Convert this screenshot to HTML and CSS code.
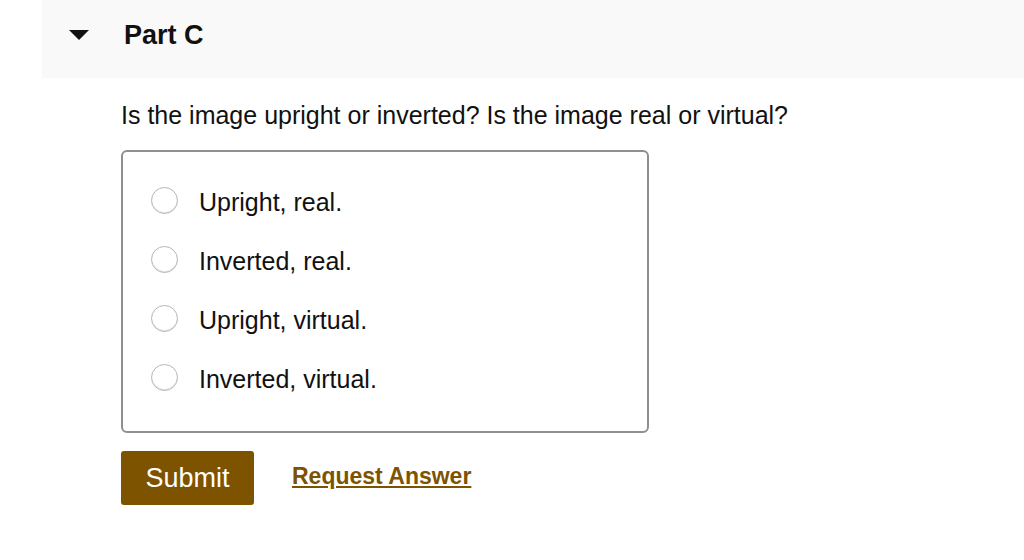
FILE: index.html
```html
<!DOCTYPE html>
<html>
<head>
<meta charset="utf-8">
<link rel="stylesheet" href="styles.css">
</head>
<body>
<div class="header">
  <span class="caret"></span>
  <h2 class="title">Part C</h2>
</div>
<div class="content">
  <p class="question">Is the image upright or inverted? Is the image real or virtual?</p>
  <div class="choices">
    <label class="choice"><span class="radio"></span><span class="label">Upright, real.</span></label>
    <label class="choice"><span class="radio"></span><span class="label">Inverted, real.</span></label>
    <label class="choice"><span class="radio"></span><span class="label">Upright, virtual.</span></label>
    <label class="choice"><span class="radio"></span><span class="label">Inverted, virtual.</span></label>
  </div>
  <div class="actions">
    <button class="submit">Submit</button>
    <a class="request" href="#">Request Answer</a>
  </div>
</div>
</body>
</html>
```

FILE: styles.css
```css
html, body {
  margin: 0;
  padding: 0;
  background: #ffffff;
  font-family: "Liberation Sans", Arial, sans-serif;
  color: #111111;
}
.header {
  margin-left: 42px;
  height: 78px;
  background: #f9f9f9;
  display: flex;
  align-items: center;
  padding-left: 27px;
  box-sizing: border-box;
  padding-bottom: 8px;
}
.caret {
  width: 0;
  height: 0;
  border-left: 10px solid transparent;
  border-right: 10px solid transparent;
  border-top: 10px solid #111111;
  margin-right: 35px;
}
.title {
  margin: 0;
  font-size: 27px;
  font-weight: bold;
  line-height: 30px;
}
.content {
  padding-left: 121px;
}
.question {
  margin: 23px 0 0 0;
  font-size: 25px;
  line-height: 28px;
  color: #111111;
}
.choices {
  margin-top: 21px;
  width: 528px;
  height: 283px;
  box-sizing: border-box;
  border: 2px solid #8f8f8f;
  border-radius: 6px;
  padding: 36px 0 0 28px;
  display: flex;
  flex-direction: column;
  gap: 31px;
}
.choice {
  display: flex;
  align-items: center;
  height: 28px;
}
.radio {
  width: 27px;
  height: 27px;
  box-sizing: border-box;
  border-radius: 50%;
  border: 1px solid #b5b5b5;
  background: #ffffff;
  box-shadow: inset 0 -1px 1px rgba(0,0,0,0.12);
  margin-right: 21px;
  margin-top: -4px;
  flex: none;
}
.label {
  font-size: 25px;
  line-height: 28px;
  color: #111111;
}
.actions {
  margin-top: 18px;
  display: flex;
  align-items: center;
  gap: 38px;
}
.submit {
  width: 133px;
  height: 54px;
  background: #7e5300;
  color: #ffffff;
  border: none;
  border-radius: 3px;
  font-family: "Liberation Sans", Arial, sans-serif;
  font-size: 27px;
  padding: 0;
}
.request {
  color: #7e5300;
  font-weight: bold;
  font-size: 23px;
  text-decoration: underline;
  margin-top: -4px;
}
```
